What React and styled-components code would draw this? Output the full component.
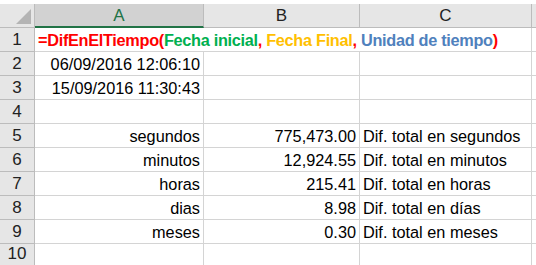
import React from 'react'
import styled, { createGlobalStyle } from 'styled-components'

const GlobalStyle = createGlobalStyle`
  html, body {
    margin: 0;
    padding: 0;
    background: #fff;
    overflow: hidden;
  }
`

const GRID = '#d4d4d4'
const HEAD_LINE = '#bcbcbc'

const Sheet = styled.div`
  width: 536px;
  height: 265px;
  padding-top: 4px;
  box-sizing: border-box;
  display: grid;
  grid-template-columns: 35px 169px 156px 172px 1fr;
  grid-template-rows: 24px repeat(9, 24px) 1fr;
  font-family: 'Liberation Sans', Arial, sans-serif;
  font-size: 16.3px;
  color: #000;
  overflow: hidden;
`

const Corner = styled.div`
  position: relative;
  background: #e6e6e6;
  border-right: 1px solid ${HEAD_LINE};
  border-bottom: 1px solid ${HEAD_LINE};
  &::after {
    content: '';
    position: absolute;
    right: 3px;
    bottom: 3px;
    width: 0;
    height: 0;
    border-left: 15px solid transparent;
    border-bottom: 15px solid #b4b4b4;
  }
`

const ColHead = styled.div`
  display: flex;
  align-items: center;
  justify-content: center;
  font-size: 17px;
  background: ${(p) => (p.$active ? '#d2d2d2' : '#e6e6e6')};
  color: ${(p) => (p.$active ? '#217346' : '#222')};
  border-right: 1px solid ${HEAD_LINE};
  border-bottom: ${(p) => (p.$active ? '2px solid #217346' : `1px solid ${HEAD_LINE}`)};
  padding-top: ${(p) => (p.$active ? '1px' : '0')};
`

const RowHead = styled.div`
  display: flex;
  align-items: flex-end;
  justify-content: center;
  padding-bottom: 1px;
  font-size: 17px;
  background: #e6e6e6;
  color: #222;
  border-right: 1px solid ${HEAD_LINE};
  border-bottom: 1px solid ${HEAD_LINE};
`

const Cell = styled.div`
  display: flex;
  align-items: flex-end;
  justify-content: ${(p) => (p.$right ? 'flex-end' : 'flex-start')};
  padding: 0 3px 1px 3px;
  border-right: ${(p) => (p.$spill ? 'none' : `1px solid ${GRID}`)};
  border-bottom: 1px solid ${GRID};
  white-space: nowrap;
  overflow: visible;
  min-width: 0;
  position: relative;
  z-index: ${(p) => (p.$spill ? 1 : 0)};
`

const Formula = styled.span`
  font-weight: bold;
  letter-spacing: -0.3px;
  color: #ff0000;
`

const Arg = styled.span`
  color: ${(p) => p.$color};
`

const data = [
  ['', '', ''],
  ['06/09/2016 12:06:10', '', ''],
  ['15/09/2016 11:30:43', '', ''],
  ['', '', ''],
  ['segundos', '775,473.00', 'Dif. total en segundos'],
  ['minutos', '12,924.55', 'Dif. total en minutos'],
  ['horas', '215.41', 'Dif. total en horas'],
  ['dias', '8.98', 'Dif. total en días'],
  ['meses', '0.30', 'Dif. total en meses'],
  ['', '', '']
]

export default function App () {
  return (
    <>
      <GlobalStyle />
      <Sheet>
        <Corner />
        <ColHead $active>A</ColHead>
        <ColHead>B</ColHead>
        <ColHead>C</ColHead>
        <ColHead />
        {data.map((row, i) => (
          <React.Fragment key={i}>
            <RowHead>{i + 1}</RowHead>
            {i === 0 ? (
              <Cell $spill>
                <Formula>
                  =DifEnElTiempo(
                  <Arg $color='#00b050'>Fecha inicial</Arg>,{' '}
                  <Arg $color='#ffc000'>Fecha Final</Arg>,{' '}
                  <Arg $color='#4f81bd'>Unidad de tiempo</Arg>)
                </Formula>
              </Cell>
            ) : (
              <Cell $right>{row[0]}</Cell>
            )}
            <Cell $right $spill={i === 0}>{row[1]}</Cell>
            <Cell>{row[2]}</Cell>
            <Cell />
          </React.Fragment>
        ))}
      </Sheet>
    </>
  )
}
